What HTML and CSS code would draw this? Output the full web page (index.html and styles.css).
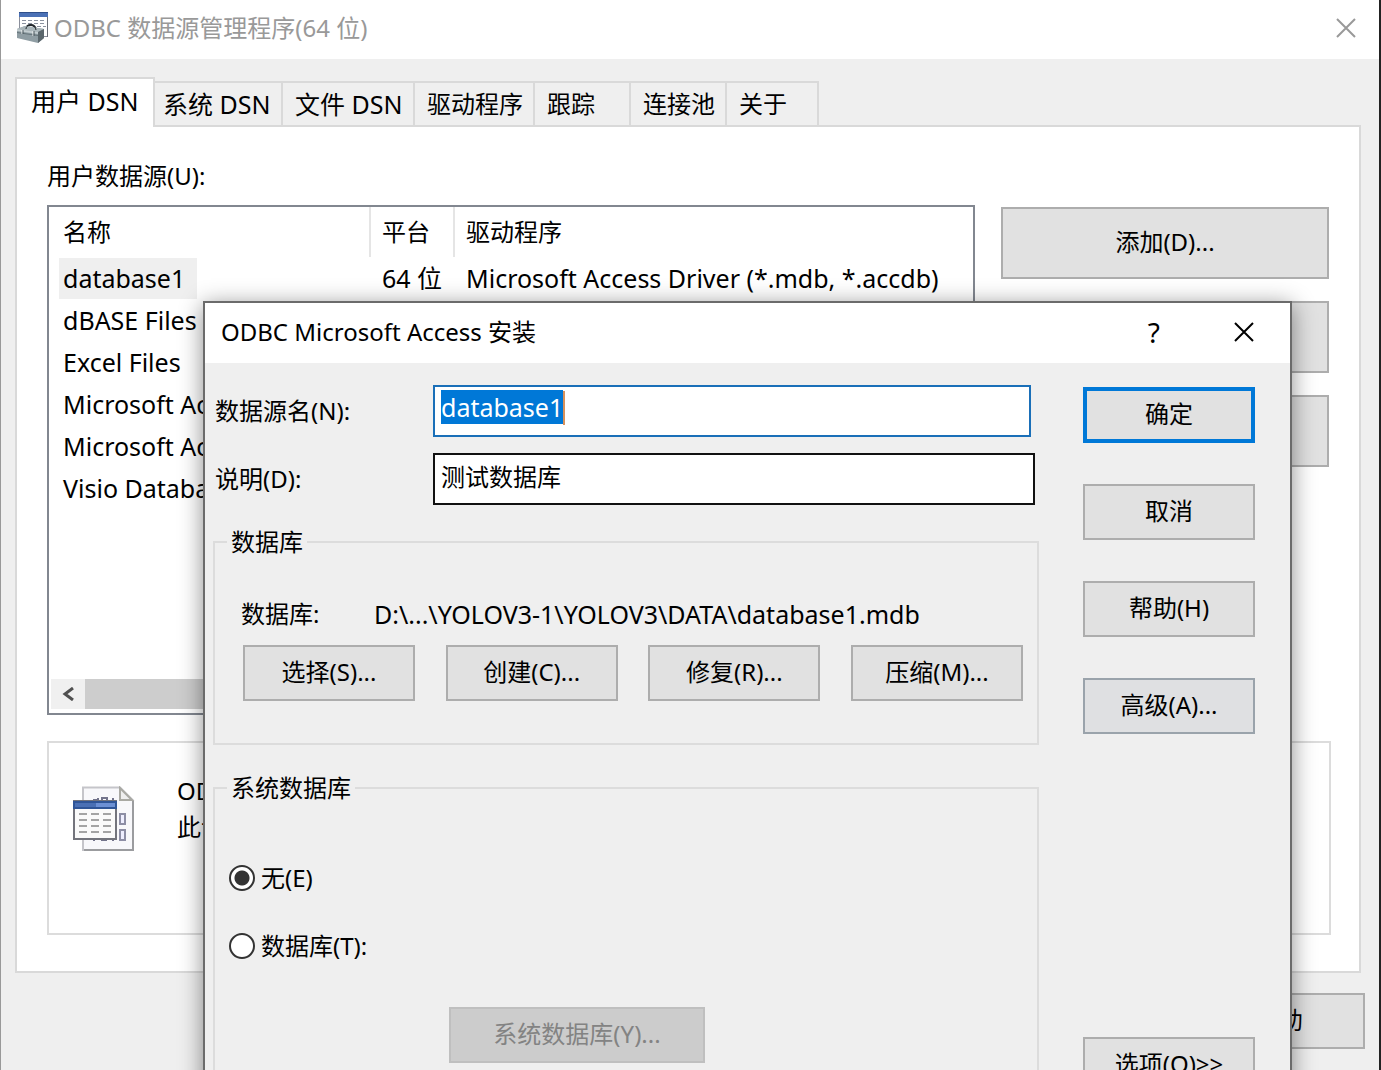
FILE: index.html
```html
<!DOCTYPE html>
<html lang="zh-CN">
<head>
  <meta charset="UTF-8">
  <meta name="viewport" content="width=device-width, initial-scale=1.0">
  <title>ODBC 数据源管理程序(64 位)</title>
  <link rel="stylesheet" href="styles.css">
</head>
<body>
  <div class="window">
    <header class="titlebar">
      <svg class="app-icon" width="32" height="32" viewBox="0 0 32 32">
        <rect x="2.500" y="0.500" width="28" height="24" fill="#fff" stroke="#8b8f9c"/>
        <rect x="2" y="0" width="29" height="5" fill="#4a70b5"/>
        <path d="M2 0.500h29" stroke="#2f4f8a"/>
        <path d="M5 8.500h24M5 11.500h24M20 14.500h9" stroke="#8c93a0" stroke-dasharray="4 2"/>
        <path d="M30.500 5v20" stroke="#6b6f78"/>
        <path d="M9 17c0-5 9-6 10 1" fill="none" stroke="#22282c" stroke-width="2"/>
        <path d="M0 17l8-3 19 3v9l-6 5-21-5z" fill="#8f9da3"/>
        <path d="M0 17l8-3 19 3-6 3z" fill="#aab6ba"/>
        <path d="M21 20l6-3v9l-6 5z" fill="#5b676c"/>
        <path d="M0 17l21 3v2L0 19z" fill="#c3cdd0"/>
        <path d="M0 20.500l21 3" stroke="#66757b"/>
        <path d="M5 18v4M16 19v5" stroke="#f2f5f5"/>
        <path d="M6 18v4M17 19v5" stroke="#4c595e"/>
        <path d="M9 17c0-5 9-6 10 1" fill="none" stroke="#22282c"/>
      </svg>
      <h1>ODBC 数据源管理程序(64 位)</h1>
      <button class="title-btn main-close" aria-label="关闭">
        <svg width="20" height="20" viewBox="0 0 20 20"><path d="M1 1l18 18M19 1L1 19" stroke="currentColor" stroke-width="2"/></svg>
      </button>
    </header>

    <nav class="tabs">
      <button class="tab dsn active">用户 DSN</button>
      <button class="tab dsn">系统 DSN</button>
      <button class="tab dsn">文件 DSN</button>
      <button class="tab">驱动程序</button>
      <button class="tab">跟踪</button>
      <button class="tab">连接池</button>
      <button class="tab short">关于</button>
    </nav>

    <main class="panel">
      <h2>用户数据源(U):</h2>
      <div class="sources">
        <div class="list">
          <table>
            <thead>
              <tr><th class="col-name">名称</th><th class="col-platform">平台</th><th>驱动程序</th></tr>
            </thead>
            <tbody>
              <tr><td><span class="selected">database1</span></td><td>64 位</td><td>Microsoft Access Driver (*.mdb, *.accdb)</td></tr>
              <tr><td>dBASE Files</td><td></td><td></td></tr>
              <tr><td>Excel Files</td><td></td><td></td></tr>
              <tr><td>Microsoft Access</td><td></td><td></td></tr>
              <tr><td>Microsoft Access</td><td></td><td></td></tr>
              <tr><td>Visio Database</td><td></td><td></td></tr>
            </tbody>
          </table>
          <div class="scrollbar">
            <button class="scroll-left" aria-label="向左滚动">
              <svg width="12" height="14" viewBox="0 0 12 14"><path d="M11 1L3 7l8 6" fill="none" stroke="#505050" stroke-width="3"/></svg>
            </button>
            <div class="thumb"></div>
          </div>
        </div>
        <div class="source-actions">
          <button class="btn">添加(D)...</button>
          <button class="btn">删除(R)</button>
          <button class="btn">配置(C)...</button>
        </div>
      </div>

      <div class="info">
        <svg width="64" height="66" viewBox="0 0 64 66">
          <path d="M11 1.500h37l13 13V64H11z" fill="#f8f8fb" stroke="#c5c5ca" stroke-width="2"/>
          <path d="M12 64h49V15" fill="none" stroke="#9b9c9f" stroke-width="2"/>
          <path d="M48 2v12h12z" fill="#eee" stroke="#a9a9a3" stroke-width="2"/>
          <path d="M21 14h5v-2M30 16v-4h5v4M41 16v-4M22 53v2M29 54h6M41 53v2" fill="none" stroke="#73748c" stroke-width="2"/>
          <path d="M48 28h5v10h-5zM48 44h5v10h-5z" fill="#eef" stroke="#8d8ea5" stroke-width="2"/>
          <path d="M2 15h42v38H2z" fill="#fafafa" stroke="#73747c" stroke-width="2"/>
          <path d="M1 15h44v8H1z" fill="#2f5597"/>
          <path d="M3 17h40v4H3z" fill="#4a70b5"/>
          <path d="M24 17h19v4H24z" fill="#6c90d4"/>
          <path d="M7 28h34M7 34h34M7 40h34M7 46h34" stroke="#a4a4a4" stroke-width="2" stroke-dasharray="8 4"/>
        </svg>
        <p>ODBC 用户数据源存储了如何与指定数据提供程序连接的信息。<br>此计算机上的当前用户可以使用用户数据源。</p>
      </div>
    </main>

    <footer class="window-footer">
      <button class="btn">帮助</button>
    </footer>

    <section class="dialog" role="dialog" aria-labelledby="dialogTitle">
      <header class="dialog-title">
        <h2 id="dialogTitle">ODBC Microsoft Access 安装</h2>
        <button class="title-btn help">?</button>
        <button class="title-btn close" aria-label="关闭">
          <svg width="20" height="20" viewBox="0 0 20 20"><path d="M1 1l18 18M19 1L1 19" stroke="currentColor" stroke-width="2"/></svg>
        </button>
      </header>

      <form class="dialog-body">
        <div class="fields">
          <div class="field">
            <label for="dsn">数据源名(N):</label>
            <div class="edit focused">
              <input type="text" id="dsn" value="database1" autocomplete="off" spellcheck="false">
              <span class="caret"></span>
            </div>
          </div>
          <div class="field">
            <label for="desc">说明(D):</label>
            <div class="edit">
              <input type="text" id="desc" value="测试数据库" autocomplete="off" spellcheck="false">
            </div>
          </div>

          <fieldset class="database">
            <legend>数据库</legend>
            <div class="path"><span>数据库:</span><span class="file">D:\...\YOLOV3-1\YOLOV3\DATA\database1.mdb</span></div>
            <div class="db-actions">
              <button type="button" class="btn">选择(S)...</button>
              <button type="button" class="btn">创建(C)...</button>
              <button type="button" class="btn">修复(R)...</button>
              <button type="button" class="btn">压缩(M)...</button>
            </div>
          </fieldset>

          <fieldset class="system-db">
            <legend>系统数据库</legend>
            <div class="radio"><input type="radio" name="sysdb" id="sysNone" checked><label for="sysNone">无(E)</label></div>
            <div class="radio"><input type="radio" name="sysdb" id="sysDb"><label for="sysDb">数据库(T):</label></div>
            <button type="button" class="btn system-btn" disabled>系统数据库(Y)...</button>
          </fieldset>
        </div>

        <div class="dialog-actions">
          <button type="button" class="btn default">确定</button>
          <button type="button" class="btn">取消</button>
          <button type="button" class="btn">帮助(H)</button>
          <button type="button" class="btn hot">高级(A)...</button>
          <button type="button" class="btn options">选项(O)&gt;&gt;</button>
        </div>
      </form>
    </section>
  </div>

  <script>
    const dsn = document.getElementById('dsn');
    dsn.focus();
    dsn.select();
  </script>
</body>
</html>
```
FILE: styles.css
```css
* {
  box-sizing: border-box;
}
body {
  margin: 0;
  font-family: "Noto Sans", "Noto Sans CJK SC", sans-serif;
  font-size: 24px;
  line-height: 32px;
  color: #000;
}
h1, h2, p {
  margin: 0;
  font-size: 24px;
  font-weight: normal;
}
button, input {
  font: inherit;
  color: inherit;
}
button {
  padding: 0;
}
svg {
  display: block;
}

/* main window */
.window {
  position: relative;
  display: flex;
  flex-direction: column;
  height: 100vh;
  overflow: hidden;
  background-color: #efefef;
  border-left: 1px solid #999;
  border-right: 2px solid #222;
}
.titlebar {
  display: flex;
  align-items: center;
  flex-shrink: 0;
  height: 59px;
  padding: 0 23px 4px 16px;
  background-color: #fff;
  color: #999;
}
.titlebar h1 {
  flex: 1;
  margin-left: 5px;
}
.title-btn {
  border: none;
  background: none;
}
.tabs {
  display: flex;
  align-items: flex-end;
  flex-shrink: 0;
  height: 68px;
  padding-left: 14px;
}
.tab {
  height: 46px;
  min-width: 96px;
  padding: 0 10px 0 12px;
  background-color: #efefef;
  border: 2px solid #d9d9d9;
  border-left: none;
  text-align: left;
}
.tab.dsn {
  min-width: 132px;
  font-size: 25px;
}
.tab.short {
  min-width: 92px;
}
.tab.active {
  z-index: 1;
  height: 50px;
  min-width: 140px;
  margin-right: -4px;
  padding: 0 14px 4px;
  background-color: #fff;
  border-left: 2px solid #d9d9d9;
  border-bottom: none;
}
.panel {
  flex-shrink: 0;
  margin: -2px 18px 0 14px;
  padding: 33px 28px 36px 30px;
  background-color: #fff;
  border: 2px solid #d9d9d9;
}
.sources {
  display: grid;
  grid-template-columns: 1fr 328px;
  gap: 26px;
  margin: 13px 2px 26px 0;
}
.list {
  display: flex;
  flex-direction: column;
  justify-content: space-between;
  height: 510px;
  border: 2px solid #828790;
}
.list table {
  width: 100%;
  table-layout: fixed;
  border-collapse: collapse;
}
.list th {
  height: 50px;
  padding: 0 0 0 11px;
  border-right: 2px solid #e5e5e5;
  font-weight: normal;
  text-align: left;
}
.list th:last-child {
  border-right: none;
}
.list .col-name {
  width: 321px;
  padding-left: 14px;
}
.list .col-platform {
  width: 84px;
}
.list td {
  height: 42px;
  padding: 0 0 0 12px;
  font-size: 25px;
  white-space: nowrap;
}
.list td:first-child {
  padding-left: 14px;
}
.selected {
  display: block;
  width: 138px;
  height: 41px;
  margin-left: -4px;
  padding-left: 4px;
  background-color: #efefef;
  line-height: 40px;
}
.scrollbar {
  display: flex;
  height: 30px;
  margin: 0 2px 4px;
  background-color: #f0f0f0;
}
.scroll-left {
  display: flex;
  align-items: center;
  justify-content: center;
  width: 34px;
  border: none;
  background: none;
}
.thumb {
  width: 70%;
  background-color: #cdcdcd;
}
.source-actions {
  display: flex;
  flex-direction: column;
  gap: 22px;
  padding-top: 2px;
}
.btn {
  width: 172px;
  height: 56px;
  padding-bottom: 2px;
  background-color: #e1e1e1;
  border: 2px solid #adadad;
}
.source-actions .btn {
  width: 100%;
  height: 72px;
}
.info {
  display: flex;
  gap: 41px;
  height: 194px;
  padding: 30px 23px;
  border: 2px solid #dcdcdc;
}
.info svg {
  flex-shrink: 0;
  margin-top: 13px;
}
.info p {
  line-height: 36px;
}
.window-footer {
  display: flex;
  justify-content: flex-end;
  padding: 20px 14px;
}

/* setup dialog, floats over the main window */
.dialog {
  position: absolute;
  top: 301px;
  left: 202px;
  right: 87px;
  z-index: 2;
  background-color: #efefef;
  border: 2px solid #6b6b6b;
  box-shadow: 0 4px 22px rgba(0, 0, 0, 0.45);
}
.dialog-title {
  display: flex;
  align-items: center;
  height: 60px;
  padding: 0 36px 2px 16px;
  background-color: #fff;
}
.dialog-title h2 {
  flex: 1;
}
.title-btn.help {
  margin-right: 74px;
  font-size: 28px;
}
.dialog-body {
  display: grid;
  grid-template-columns: 1fr 172px;
  gap: 44px;
  padding: 22px 35px 40px 8px;
}
.field {
  display: grid;
  grid-template-columns: 218px 1fr;
  align-items: center;
  margin: 0 4px 16px 2px;
}
.edit {
  position: relative;
  border: 2px solid #111;
  background-color: #fff;
}
.edit.focused {
  margin-right: 4px;
  border-color: #1a6fb8;
  font-size: 25px;
}
.edit input {
  display: block;
  width: 100%;
  height: 48px;
  padding: 3px 6px 11px;
  border: none;
  outline: none;
  background: none;
  line-height: 34px;
}
.edit input::selection {
  background-color: #0078d7;
  color: #fff;
}
.caret {
  position: absolute;
  top: 4px;
  left: 128px;
  width: 2px;
  height: 34px;
  background-color: #d8925c;
}
fieldset {
  min-width: 0;
  margin: 0;
  padding: 0 12px;
  border: 2px solid #dcdcdc;
}
legend {
  padding: 0 4px;
}
.database {
  margin: 21px 0 27px;
  padding-bottom: 42px;
}
.path {
  display: grid;
  grid-template-columns: 133px 1fr;
  margin: 40px 0 15px 14px;
}
.file {
  font-size: 25px;
}
.db-actions {
  display: flex;
  justify-content: space-between;
  margin: 0 2px 0 16px;
}
.system-db {
  padding-bottom: 60px;
}
.radio {
  display: flex;
  align-items: center;
  gap: 6px;
  margin: 36px 0 0 2px;
}
legend + .radio {
  margin-top: 58px;
}
.radio input {
  appearance: none;
  width: 26px;
  height: 26px;
  margin: 0;
  border: 2px solid #333;
  border-radius: 50%;
  background-color: #fff;
}
.radio input:checked {
  background-image: radial-gradient(circle, #333 7px, #fff 8px);
}
.system-btn {
  display: block;
  width: 256px;
  margin: 45px 0 0 222px;
}
.btn:disabled {
  background-color: #cccccc;
  border-color: #bfbfbf;
  color: #838383;
}
.dialog-actions {
  display: flex;
  flex-direction: column;
  gap: 41px;
  padding-top: 2px;
}
.btn.default {
  border: 4px solid #0078d7;
}
.btn.hot {
  background-color: #dfe0e2;
  border-color: #9aa3ab;
}
.btn.options {
  margin-top: 262px;
}
```
